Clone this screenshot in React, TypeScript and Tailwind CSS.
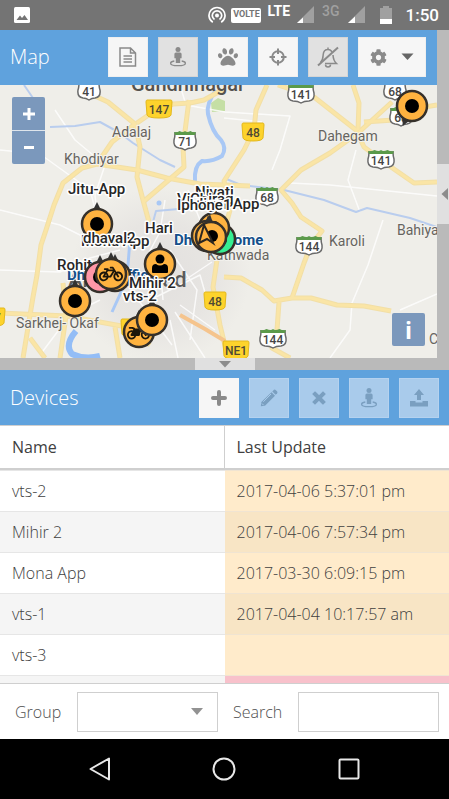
import React from 'react';
import { FaPaw, FaCog, FaBicycle, FaMotorcycle } from 'react-icons/fa';

type ShieldKind = 'us' | 'national' | 'express';

interface Device {
  name: string;
  lastUpdate: string;
  status: string;
}

interface MarkerProps {
  x: number;
  y: number;
  color?: string;
  angle?: number;
  children?: React.ReactNode;
}

const devices: Device[] = [
  { name: 'vts-2', lastUpdate: '2017-04-06 5:37:01 pm', status: 'bg-[#ffebcb]' },
  { name: 'Mihir 2', lastUpdate: '2017-04-06 7:57:34 pm', status: 'bg-[#f8e5c5]' },
  { name: 'Mona App', lastUpdate: '2017-03-30 6:09:15 pm', status: 'bg-[#ffebcb]' },
  { name: 'vts-1', lastUpdate: '2017-04-04 10:17:57 am', status: 'bg-[#f8e5c5]' },
  { name: 'vts-3', lastUpdate: '', status: 'bg-[#ffebcb]' },
  { name: '', lastUpdate: '', status: 'bg-[#f8c1cb]' },
];

const majorRoads = [
  'M95 96 L108 102 L135 124 L140 147 L137 177 L143 200 L149 222',
  'M137 123 L150 114 L173 104 L190 103 L204 100 L222 90',
  'M189 100 L183 147 L184 167 L143 202',
  'M135 124 L112 142 L97 164 L82 168 L63 183 L54 205 L46 230 L41 245 L37 275 L33 297 L23 358',
  'M97 164 L137 170 L167 178 L200 184 L250 186',
  'M267 85 L256 110 L254 130 L244 150 L224 181 L230 210 L218 253 L213 287 L220 325 L228 358',
  'M278 85 L314 97 L356 130 L364 147 L391 167 L414 183 L437 182',
  'M353 85 L359 103 L358 130',
  'M392 102 L358 133 L330 153 L301 170 L281 190 L292 203 L301 217 L322 231 L311 245 L304 263 L292 298',
  'M364 122 L394 120 M425 107 L437 105',
  'M224 277 L241 278 L262 290 L274 301 L292 298 L311 298 L337 305 L364 306 L391 311',
  'M279 302 L277 330 L272 348 L290 358',
  'M0 313 L67 316 L127 327 L150 345',
  'M63 283 L66 316 L60 358 M115 327 L120 358',
  'M30 338 L45 358',
];

const minorRoads = [
  'M55 110 L75 140 L105 165 L95 195 L98 225',
  'M180 85 L186 105 L225 112 L290 116 L280 150 L272 170',
  'M0 150 L40 154 L90 190 L98 220',
  'M0 270 L28 271 L60 272 L90 258 L120 250',
  'M160 264 L163 300 M170 250 L197 290 L190 340 M150 300 L200 275 L210 310',
  'M356 150 L348 180 L360 212 M290 183 L330 185 L437 196',
  'M383 220 L368 265 L352 303 L350 330 L330 358',
  'M437 294 L400 310 M224 118 L262 122',
  'M165 200 L160 232 L145 260 M188 190 L200 220',
  'M40 355 L70 315 L100 300 M130 290 L150 315 L172 345',
  'M0 210 L60 225 L100 245',
  'M170 320 L178 358 M175 312 L205 358 M180 305 L215 330 M185 280 L212 262',
];

const rivers = [
  'M50 127 L75 126 L100 122 L120 133 L133 143 L160 160 L175 167',
  'M24 85 L33 98',
  'M224 178 L241 185 L284 190 L324 200 L356 212 L367 208 L410 218 L437 227',
  'M153 222 L156 211 L190 208',
];

// Highway shield with its route number
const Shield: React.FC<{ x: number; y: number; text: string; kind?: ShieldKind }> = ({ x, y, text, kind = 'us' }) => {
  const w = text.length > 2 ? 13 : 11;
  if (kind !== 'us') {
    return (
      <g transform={`translate(${x} ${y})`}>
        <path
          d={`M${-w + 1} -9 H${w - 1} Q${w} -9 ${w} -7 L${w - 1} 6 Q${w - 2} 9 0 9 Q${-w + 2} 9 ${-w + 1} 6 L${-w} -7 Q${-w} -9 ${-w + 1} -9Z`}
          fill="#fdd32c"
          stroke="#e3b81c"
        />
        <text y="5" textAnchor="middle" fontSize="12" fontWeight="500" fill="#4e4a35">{text}</text>
      </g>
    );
  }
  return (
    <g transform={`translate(${x} ${y})`}>
      <path
        d={`M${-w + 1} -8 L${w - 1} -8 Q${w - 1} -4 ${w} -1 Q${w + 1} 6 ${w - 5} 7 Q3 7 0 9 Q-3 7 ${-w + 5} 7 Q${-w - 1} 6 ${-w} -1 Q${-w + 1} -4 ${-w + 1} -8Z`}
        fill="#fff"
        stroke="#6b6b6b"
        strokeWidth="1.5"
      />
      <path d={`M${-w} -9 Q${-w + 3} -8 ${-w / 2} -10 Q-2 -8 0 -10 Q2 -8 ${w / 2} -10 Q${w - 3} -8 ${w} -9 L${w - 1} -6 H${-w + 1}Z`} fill="#5b9a4a" />
      <text y="5" textAnchor="middle" fontSize="12" fontWeight="500" fill="#454545">{text}</text>
    </g>
  );
};

const Marker: React.FC<MarkerProps> = ({ x, y, color = '#ffb340', angle = 0, children }) => (
  <g transform={`translate(${x} ${y})`}>
    <path d="M-4 -14 L0 -22 L4 -14Z" fill="#333" transform={`rotate(${angle})`} />
    <circle r="15" fill={color} stroke="#35302a" strokeWidth="2.5" />
    {children || <circle r="7" fill="#000" />}
  </g>
);

const MarkerLabel: React.FC<{ x: number; y: number; text: string }> = ({ x, y, text }) => (
  <text x={x} y={y} fontSize="15" fontWeight="500" fill="#262626" stroke="#fff" strokeWidth="3" strokeLinejoin="round" paintOrder="stroke">
    {text}
  </text>
);

const PlaceLabel: React.FC<{ x: number; y: number; text: string; size?: number }> = ({ x, y, text, size = 14 }) => (
  <text x={x} y={y} fontSize={size} fill="#666460" stroke="#f3f2ee" strokeWidth="2" paintOrder="stroke">
    {text}
  </text>
);

const MapView = () => (
  <svg
    className="block h-full w-full font-[Roboto,sans-serif]"
    viewBox="0 85 437 273"
    preserveAspectRatio="xMidYMid slice"
    role="img"
    aria-label="Device map"
  >
    <defs>
      <radialGradient id="urban">
        <stop offset="0" stopColor="#e2e0de" />
        <stop offset="0.6" stopColor="#e7e5e2" />
        <stop offset="1" stopColor="#efeee9" />
      </radialGradient>
    </defs>
    <rect x="-500" y="-500" width="1500" height="1500" fill="#efeee9" />
    <ellipse cx="160" cy="275" rx="90" ry="88" fill="url(#urban)" />
    <path d="M211 103 L218 98 L225 101 V111 L212 112Z" fill="#c5dfa5" />

    <g fill="none" stroke="#fff" strokeWidth="1.5" strokeLinejoin="round" opacity="0.8">
      {minorRoads.map(d => <path key={d} d={d} />)}
    </g>
    <g fill="none" stroke="#b9cdee" strokeWidth="2" strokeLinejoin="round">
      {rivers.map(d => <path key={d} d={d} />)}
    </g>
    <path d="M216 90 Q206 104 208 114 Q212 132 221 140 Q227 148 222 156 Q212 162 202 161 Q194 166 195 181" fill="none" stroke="#a9c8f5" strokeWidth="4" />
    <path d="M130 240 L128 265 L122 290 L112 312" fill="none" stroke="#a9c8f5" strokeWidth="3" />
    <path d="M76 331 Q64 345 72 354 Q85 360 100 356" fill="none" stroke="#93bdf6" strokeWidth="6" />
    <circle cx="159" cy="203" r="2.5" fill="#a9c8f5" />

    <g fill="none" stroke="#f2dfa6" strokeWidth="5" strokeLinejoin="round">
      {majorRoads.map(d => <path key={d} d={d} />)}
    </g>
    <g fill="none" stroke="#fae5a6" strokeWidth="3" strokeLinejoin="round">
      {majorRoads.map(d => <path key={d} d={d} />)}
    </g>
    <path d="M180 315 L205 329 L225 341" fill="none" stroke="#f5c48d" strokeWidth="4" />

    <text x="131" y="91" fontSize="20" fontWeight="500" fill="#55534f">Gandhinagar</text>
    <PlaceLabel x={112} y={137} text="Adalaj" />
    <PlaceLabel x={64} y={164} text="Khodiyar" />
    <PlaceLabel x={318} y={141} text="Dahegam" />
    <PlaceLabel x={329} y={246} text="Karoli" />
    <PlaceLabel x={397} y={235} text="Bahiyal" />
    <PlaceLabel x={207} y={260} text="Kathwada" />
    <PlaceLabel x={16} y={328} text="Sarkhej- Okaf" />
    <PlaceLabel x={429} y={344} text="Ch" />
    <text x="68" y="287" fontSize="22" fontWeight="500" fill="#5b5b5b">Ahmedabad</text>

    <Shield x={89} y={91} text="41" />
    <Shield x={159} y={109} text="147" kind="national" />
    <Shield x={185} y={141} text="71" />
    <Shield x={253} y={132} text="48" kind="national" />
    <Shield x={301} y={94} text="141" />
    <Shield x={381} y={160} text="141" />
    <Shield x={395} y={91} text="68" />
    <Shield x={401} y={117} text="68" />
    <Shield x={267} y={197} text="68" />
    <Shield x={309} y={246} text="144" />
    <Shield x={273} y={339} text="144" />
    <Shield x={215} y={301} text="48" kind="national" />
    <Shield x={236} y={350} text="NE1" kind="express" />
    <Shield x={-6} y={317} text="47" kind="national" />
    <Shield x={132} y={328} text="48" kind="national" />

    <g fontSize="15" fontWeight="700" fill="#15508a" stroke="#fff" strokeWidth="2" paintOrder="stroke">
      <text x="67" y="280">Dhaval Office</text>
      <text x="174" y="245">Dhaval Home</text>
    </g>

    <Marker x={97} y={224} />
    <MarkerLabel x={68} y={194} text="Jitu-App" />

    <MarkerLabel x={57} y={270} text="Rohit-" />
    <Marker x={100} y={277} color="#ff97a8" />
    <Marker x={115} y={276} />
    <MarkerLabel x={81} y={246} text="Mona App" />
    <MarkerLabel x={83} y={243} text="dhaval2" />
    <Marker x={111} y={274}>
      <FaBicycle x={-12} y={-12} size={24} color="#1c160b" />
    </Marker>
    <Marker x={75} y={301} />

    <Marker x={160} y={264}>
      <circle cy="-5" r="4.5" fill="#000" />
      <path d="M-8 8 V4 Q-8 0 -4 0 Q0 3 4 0 Q8 0 8 4 V8 Q8 9 7 9 H-7 Q-8 9 -8 8Z" fill="#000" />
    </Marker>
    <MarkerLabel x={145} y={233} text="Hari" />

    <Marker x={139} y={332}>
      <FaMotorcycle x={-12} y={-11} size={23} color="#1c160b" />
    </Marker>
    <Marker x={152} y={320} />
    <MarkerLabel x={129} y={288} text="Mihir 2" />
    <MarkerLabel x={123} y={301} text="vts-2" />

    <Marker x={220} y={239} color="#35ee92" angle={-30} />
    <Marker x={214} y={228} />
    <Marker x={207} y={236} angle={8} />
    <Marker x={211} y={237} angle={-8}>
      <circle cx="1" cy="-1" r="6" fill="#000" />
      <path d="M-7 -12 L2 6 L-4 2 L-12 6Z" fill="#ffb340" stroke="#2b2620" strokeWidth="2" />
    </Marker>
    <MarkerLabel x={195} y={197} text="Nivati" />
    <MarkerLabel x={177} y={204} text="Vi" />
    <MarkerLabel x={190} y={204} text="Chirag" />
    <MarkerLabel x={195} y={209} text="Jigar App" />
    <MarkerLabel x={177} y={210} text="Iphone1" />

    <Marker x={412} y={106} angle={205} />
  </svg>
);

const StreetViewIcon = ({ size = 20 }: { size?: number }) => (
  <svg width={size} height={size} viewBox="0 0 20 20" fill="currentColor">
    <circle cx="10" cy="2.5" r="2.5" />
    <path d="M8 5.5h4a1.6 1.6 0 0 1 1.6 1.6v4.2h-1.4V16H7.8v-4.7H6.4V7.1A1.6 1.6 0 0 1 8 5.5z" />
    <path d="M6.3 14C3.9 14.4 2.6 15.2 2.6 16.2c0 1.5 3.3 2.5 7.4 2.5s7.4-1 7.4-2.5c0-1-1.3-1.8-3.7-2.2" fill="none" stroke="currentColor" strokeWidth="1.3" />
  </svg>
);

const mapButtonClass = 'flex h-10 w-10 items-center justify-center border border-[#efefef] bg-[#f6f6f6] text-[#8a8a8a]';
const mapPressedClass = 'flex h-10 w-10 items-center justify-center border border-[#d5d5d5] bg-[#e1e1e1] text-[#8a8a8a]';
const disabledButtonClass = 'flex h-10 w-10 items-center justify-center border border-[#b5d2ef] bg-[#a9cbeb] text-[#7a9fc0]';

const StatusBar = () => (
  <div className="flex h-[30px] items-center justify-between bg-[#747474] pr-[10px] pl-[14px] font-[Roboto,sans-serif] text-white">
    <svg width="16" height="16" viewBox="0 0 16 16">
      <rect width="16" height="16" rx="1.5" fill="#fff" />
      <path d="M2.5 13 L6 8.5 L8 11 L10.5 8 L14 13Z" fill="#747474" />
    </svg>
    <div className="flex items-center">
      <svg width="18" height="18" viewBox="0 0 18 18" fill="none" stroke="#fff" strokeWidth="1.7">
        <circle cx="9" cy="9.5" r="2" fill="#fff" stroke="none" />
        <path d="M6.5 13.5A4.7 4.7 0 1 1 11.5 13.5M4.8 16.3A8 8 0 1 1 13.2 16.3" />
      </svg>
      <span className="ml-[5px] flex h-[15px] w-[30px] items-center justify-center rounded-xs bg-white text-[9px] font-bold text-[#747474]">VOLTE</span>
      <span className="mb-[8px] ml-[6px] text-[14px] leading-[14px] font-bold">LTE</span>
      <svg className="ml-[6px]" width="19" height="18" viewBox="0 0 19 18">
        <path d="M18 0V17H1Z" fill="#a0a0a0" />
        <path d="M7 11.5V17H1Z" fill="#fff" />
      </svg>
      <span className="mb-[8px] ml-[7px] text-[14px] leading-[14px] font-medium text-[#a0a0a0]">3G</span>
      <svg className="ml-[7px]" width="19" height="18" viewBox="0 0 19 18">
        <path d="M18 0V17H1Z" fill="#a0a0a0" />
        <path d="M8 10.5V17H1Z" fill="#fff" />
      </svg>
      <svg className="ml-[14px]" width="12" height="18" viewBox="0 0 12 18">
        <path d="M3 0h6v2h3v16H0V2h3z" fill="#a0a0a0" />
        <path d="M0 13h12v5H0z" fill="#fff" />
      </svg>
      <span className="ml-[14px] text-[17px] leading-5 font-medium">1:50</span>
    </div>
  </div>
);

const MapToolbar = () => (
  <div className="flex h-[55px] justify-between bg-[#5fa2dd] pt-[7px] pr-[11px] pb-2 pl-[10px]">
    <h1 className="text-[20px] leading-10 font-light text-white">Map</h1>
    <div className="flex gap-[10px]">
      <button className={mapButtonClass} title="Reports">
        <svg width="20" height="20" viewBox="0 0 20 20" fill="none" stroke="currentColor" strokeWidth="1.5">
          <path d="M2 1h10.5L17.5 6v13H2zM12.5 1v5h5M5.5 9h8.5M5.5 12h8.5M5.5 15h8.5" />
        </svg>
      </button>
      <button className={mapPressedClass} title="Follow">
        <StreetViewIcon />
      </button>
      <button className={mapButtonClass} title="Live Routes">
        <FaPaw size={20} />
      </button>
      <button className={mapButtonClass} title="Show Accuracy">
        <svg width="18" height="18" viewBox="0 0 18 18" fill="none" stroke="currentColor" strokeWidth="2">
          <circle cx="9" cy="9" r="5.8" />
          <path d="M9 0.5V6M9 12V17.5M0.5 9H6M12 9H17.5" />
        </svg>
      </button>
      <button className={mapPressedClass} title="Mute">
        <svg width="24" height="22" viewBox="0 0 24 22" fill="none" stroke="currentColor" strokeWidth="1.5">
          <path d="M12 1.5v2M4.5 16.5C7 14 7 12 7.2 8.5C7.5 5 9.5 3.5 12 3.5c2 0 3.3 1 4 2.5M17 9c.2 4 .8 6 3.5 8.5H9" />
          <path d="M9.5 18.5a2.5 2.5 0 0 0 5 0" />
          <path d="M2 19.5L22 1.5" strokeWidth="2" />
        </svg>
      </button>
      <button className="flex h-10 w-[68px] items-center justify-center gap-[14px] border border-[#efefef] bg-[#f6f6f6] text-[#8a8a8a]" title="Settings">
        <FaCog size={17} />
        <svg width="13" height="8" viewBox="0 0 13 8"><path d="M0.5 0.5H12.5L6.5 7Z" fill="#666" /></svg>
      </button>
    </div>
  </div>
);

const DevicesToolbar = () => (
  <div className="flex h-[55px] justify-between bg-[#5fa2dd] pt-2 pr-[10px] pb-[7px] pl-[10px]">
    <h2 className="text-[20px] leading-10 font-light text-white">Devices</h2>
    <div className="flex gap-[10px]">
      <button className="flex h-10 w-10 items-center justify-center bg-[#f6f6f6] text-[#8a8a8a]" title="Add">
        <svg width="16" height="16" viewBox="0 0 16 16"><path d="M8 2V14M2 8H14" stroke="currentColor" strokeWidth="4" strokeLinecap="round" /></svg>
      </button>
      <button className={disabledButtonClass} title="Edit" disabled>
        <svg width="18" height="18" viewBox="0 0 18 18" fill="currentColor">
          <path d="M11.5 3.2L15 6.7L5 16.7L0.8 17.3L1.4 13.1Z" />
          <path d="M12.3 2.4L14 .8Q14.8 .2 15.6 .9L17.2 2.6Q17.8 3.4 17.2 4.2L15.7 5.8Z" />
          <path d="M3.3 12.8L11 5" stroke="#a9cbeb" />
          <path d="M2 14.5L3.6 16.2" stroke="#a9cbeb" />
        </svg>
      </button>
      <button className={disabledButtonClass} title="Remove" disabled>
        <svg width="14" height="14" viewBox="0 0 14 14"><path d="M3 3L11 11M11 3L3 11" stroke="currentColor" strokeWidth="4" strokeLinecap="square" /></svg>
      </button>
      <button className={disabledButtonClass} title="Follow" disabled>
        <StreetViewIcon />
      </button>
      <button className={disabledButtonClass} title="Send Command" disabled>
        <svg width="20" height="20" viewBox="0 0 20 20" fill="currentColor">
          <path d="M10 1L15 7H12V12H8V7H5Z" />
          <path d="M1 13H6.5V14.5H13.5V13H19V18.5H1Z" />
        </svg>
      </button>
    </div>
  </div>
);

const DeviceTable = () => (
  <div className="h-[258px] overflow-hidden border-t border-[#cfcfcf]">
    <table className="w-full table-fixed border-separate border-spacing-0 text-left text-[16px] leading-5">
      <thead>
        <tr className="h-[44px] text-[#404040]">
          <th className="border-r border-b-2 border-[#cfcfcf] px-3 font-normal">Name</th>
          <th className="border-b-2 border-[#cfcfcf] px-3 font-normal">Last Update</th>
        </tr>
      </thead>
      <tbody>
        {devices.map((device, i) => (
          <tr key={device.name} className="h-[41px] font-light text-[#404040]">
            <td className={`border-t border-[#e6e6e6] px-3 ${i % 2 ? 'bg-[#f5f5f5]' : 'bg-white'}`}>{device.name}</td>
            <td className={`border-t border-[#f0e4d2] px-3 ${device.status}`}>{device.lastUpdate}</td>
          </tr>
        ))}
      </tbody>
    </table>
  </div>
);

const FilterBar = () => (
  <div className="flex h-[56px] items-center border-t border-[#cfcfcf] bg-white pr-[10px] pl-[15px] text-[16px] font-light text-[#505050]">
    <label htmlFor="group">Group</label>
    <div className="relative ml-4 min-w-0 flex-1">
      <select id="group" className="block h-10 w-full appearance-none border border-[#cfcfcf] bg-white px-2" />
      <svg className="pointer-events-none absolute top-4 right-[15px]" width="12" height="7" viewBox="0 0 12 7">
        <path d="M0 0H12L6 7Z" fill="#929292" />
      </svg>
    </div>
    <label htmlFor="search" className="ml-[15px]">Search</label>
    <div className="ml-4 min-w-0 flex-1">
      <input id="search" type="text" className="block h-10 w-full border border-[#cfcfcf] bg-white px-2" />
    </div>
  </div>
);

const NavigationBar = () => (
  <nav className="grid h-[60px] grid-cols-3 bg-black px-[38px]">
    <button className="flex items-center justify-center" aria-label="Back">
      <svg width="24" height="24" viewBox="0 0 24 24"><path d="M21 1.5V22.5L2.5 12Z" fill="none" stroke="#e8e8e8" strokeWidth="2" strokeLinejoin="round" /></svg>
    </button>
    <button className="flex items-center justify-center" aria-label="Home">
      <svg width="24" height="24" viewBox="0 0 24 24"><circle cx="12" cy="12" r="10.5" fill="none" stroke="#e8e8e8" strokeWidth="2" /></svg>
    </button>
    <button className="flex items-center justify-center" aria-label="Recent apps">
      <svg width="24" height="24" viewBox="0 0 24 24"><rect x="2.5" y="2.5" width="19" height="19" rx="1" fill="none" stroke="#e8e8e8" strokeWidth="2" /></svg>
    </button>
  </nav>
);

export default function App() {
  return (
    <div className="flex h-screen flex-col bg-white font-['Open_Sans',sans-serif]">
      <StatusBar />
      <main className="flex min-h-0 flex-1 flex-col">
        <div className="flex min-h-0 flex-1">
          <section className="flex min-w-0 flex-1 flex-col">
            <MapToolbar />
            <div className="relative min-h-0 flex-1 overflow-hidden">
              <MapView />
              <div className="absolute top-3 left-3 flex flex-col gap-px rounded-xs bg-[#dfe5ec]">
                <button className="flex h-[33px] w-[33px] items-center justify-center rounded-t-xs bg-[#7b98bc]" aria-label="Zoom in">
                  <svg width="12" height="12" viewBox="0 0 12 12"><path d="M6 0V12M0 6H12" stroke="#fff" strokeWidth="3" /></svg>
                </button>
                <button className="flex h-[33px] w-[33px] items-center justify-center rounded-b-xs bg-[#7b98bc]" aria-label="Zoom out">
                  <svg width="10" height="3" viewBox="0 0 10 3"><path d="M0 1.5H10" stroke="#fff" strokeWidth="3" /></svg>
                </button>
              </div>
              <button className="absolute right-3 bottom-3 flex h-[33px] w-[33px] items-center justify-center rounded-xs bg-[#7b98bc] text-[23px] leading-6 font-bold text-white" title="Attributions">
                i
              </button>
            </div>
          </section>
          <div className="flex w-3 flex-col items-center justify-center bg-[#bababa]">
            <button className="flex h-[60px] w-3 items-center justify-end bg-[#e0e0e0]" aria-label="Collapse panel">
              <svg width="8" height="12" viewBox="0 0 8 12"><path d="M7 0V12L0.5 6Z" fill="#8c8c8c" /></svg>
            </button>
          </div>
        </div>
        <div className="flex h-3 justify-center bg-[#bababa]">
          <button className="flex h-3 w-[60px] items-center justify-center bg-[#e0e0e0]" aria-label="Collapse devices">
            <svg width="12" height="7" viewBox="0 0 12 7"><path d="M0 0H12L6 6.5Z" fill="#8c8c8c" /></svg>
          </button>
        </div>
        <DevicesToolbar />
        <DeviceTable />
        <FilterBar />
      </main>
      <NavigationBar />
    </div>
  );
}
